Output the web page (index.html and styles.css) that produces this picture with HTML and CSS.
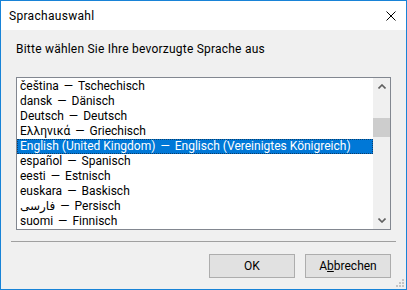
FILE: index.html
```html
<!DOCTYPE html>
<html lang="de">

<head>
    <meta charset="UTF-8">
    <meta name="viewport" content="width=device-width, initial-scale=1.0">
    <title>Sprachauswahl</title>
    <link rel="stylesheet" href="styles.css">
</head>

<body>
    <div class="window">
        <div class="titlebar">
            <span class="title">Sprachauswahl</span>
            <svg class="close" width="10" height="10" viewBox="0 0 10 10">
                <path d="M0.5 0.5L9.5 9.5M9.5 0.5L0.5 9.5" stroke="#000" stroke-width="1" fill="none" />
            </svg>
        </div>

        <div class="content">
            <p class="prompt">Bitte wählen Sie Ihre bevorzugte Sprache aus</p>

            <div class="listbox">
                <ul class="items">
                    <li>čeština <span class="dash">—</span> Tschechisch</li>
                    <li>dansk <span class="dash">—</span> Dänisch</li>
                    <li>Deutsch <span class="dash">—</span> Deutsch</li>
                    <li>Ελληνικά <span class="dash">—</span> Griechisch</li>
                    <li class="selected">English (United Kingdom) <span class="dash">—</span> Englisch (Vereinigtes Königreich)</li>
                    <li>español <span class="dash">—</span> Spanisch</li>
                    <li>eesti <span class="dash">—</span> Estnisch</li>
                    <li>euskara <span class="dash">—</span> Baskisch</li>
                    <li><bdi class="fa">فارسی</bdi> <span class="dash">—</span> Persisch</li>
                    <li>suomi <span class="dash">—</span> Finnisch</li>
                </ul>
                <div class="scrollbar">
                    <div class="arrow">
                        <svg width="8" height="5" viewBox="0 0 8 5">
                            <path d="M0.5 4.5L4 1L7.5 4.5" stroke="#606060" stroke-width="1.6" fill="none" />
                        </svg>
                    </div>
                    <div class="track">
                        <div class="thumb"></div>
                    </div>
                    <div class="arrow">
                        <svg width="8" height="5" viewBox="0 0 8 5">
                            <path d="M0.5 0.5L4 4L7.5 0.5" stroke="#606060" stroke-width="1.6" fill="none" />
                        </svg>
                    </div>
                </div>
            </div>

            <div class="separator"></div>

            <div class="buttons">
                <button class="btn">OK</button>
                <button class="btn">A<u>b</u>brechen</button>
            </div>
        </div>

        <svg class="grip" width="8" height="8" viewBox="0 0 8 8">
            <rect x="6" y="0" width="2" height="2" fill="#c4c4c4" />
            <rect x="3" y="3" width="2" height="2" fill="#c4c4c4" />
            <rect x="6" y="3" width="2" height="2" fill="#c4c4c4" />
            <rect x="0" y="6" width="2" height="2" fill="#c4c4c4" />
            <rect x="3" y="6" width="2" height="2" fill="#c4c4c4" />
            <rect x="6" y="6" width="2" height="2" fill="#c4c4c4" />
        </svg>
    </div>
</body>

</html>
```

FILE: styles.css
```css
* {
    padding: 0;
    margin: 0;
    box-sizing: border-box;
}

body {
    font-family: Roboto, "DejaVu Sans", sans-serif;
    font-size: 12px;
    color: #000;
    background-color: #fff;
}

.window {
    position: relative;
    width: 407px;
    height: 290px;
    border: 1px solid #1883d7;
    background-color: #f0f0f0;
    display: flex;
    flex-direction: column;
}

.titlebar {
    height: 29px;
    background-color: #fff;
    display: flex;
    align-items: center;
    justify-content: space-between;
    padding: 0 10px 0 8px;
}

.title {
    letter-spacing: 0.3px;
}

.content {
    flex: 1;
    padding: 0 15px;
}

.prompt {
    margin-top: 12px;
    margin-bottom: 20px;
    line-height: 15px;
    letter-spacing: 0.22px;
}

.listbox {
    height: 153px;
    border: 1px solid #828790;
    background-color: #fff;
    display: flex;
}

.items {
    flex: 1;
    list-style: none;
    padding-top: 1px;
    overflow: hidden;
}

.items li {
    height: 15px;
    line-height: 15px;
    padding-left: 3px;
    white-space: nowrap;
}

.items .dash {
    margin: 0 2px;
}

.items .fa {
    font-family: "DejaVu Sans", sans-serif;
    font-size: 12px;
}

.items li.selected {
    background-color: #0078d7;
    color: #fff;
    outline: 1px dotted #0b3c6a;
    outline-offset: -1px;
}

.scrollbar {
    width: 17px;
    background-color: #f0f0f0;
    display: flex;
    flex-direction: column;
}

.arrow {
    height: 17px;
    display: flex;
    align-items: center;
    justify-content: center;
}

.track {
    flex: 1;
}

.thumb {
    margin-top: 23px;
    height: 19px;
    background-color: #cdcdcd;
}

.separator {
    height: 1px;
    margin: 11px -5px 0;
    background-color: #a0a0a0;
}

.buttons {
    margin-top: 12px;
    display: flex;
    justify-content: flex-end;
    gap: 10px;
}

.btn {
    width: 86px;
    height: 24px;
    border: 1px solid #adadad;
    background-color: #e1e1e1;
    font-family: inherit;
    font-size: 12px;
    color: #000;
}

.grip {
    position: absolute;
    right: 2px;
    bottom: 2px;
}
```
